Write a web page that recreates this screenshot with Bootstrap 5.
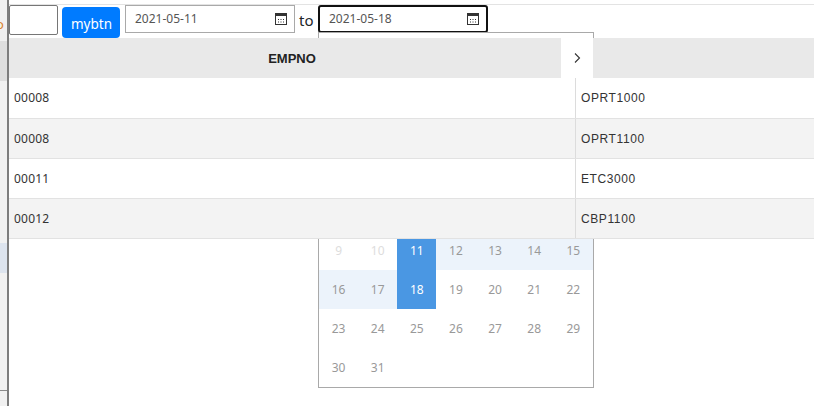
<!DOCTYPE html>
<html lang="en">
<head>
<meta charset="utf-8">
<link href="https://cdn.jsdelivr.net/npm/bootstrap@5.3.0/dist/css/bootstrap.min.css" rel="stylesheet">
<style>
html,body{height:100%;overflow:hidden;background:#fff}
body{font-family:"Noto Sans","Open Sans",sans-serif;color:#212529}
.shell{height:406px;width:814px}
.side-rail{width:9px;flex:none;background:linear-gradient(#f0f0f0 0 41px,#dedede 41px 81px,#f1f1f1 81px 243px,#dde4ee 243px 273px,#f1f1f1 273px 390px,#8a8a8a 390px 391px,#f1f1f1 391px);border-right:2px solid #7d7d7d;overflow:hidden}
.side-rail span{display:block;font-size:13px;line-height:18px;margin:15px 0 0 -4px;color:#d9822b}
.work{flex:1;min-width:0;position:relative;border-top:1px solid #e3e3e3;margin-top:4px;height:402px}
.tools{height:33px;gap:4px}
.blank-in{width:49px;height:30px;border:1px solid #767676;border-radius:2px;background:#fff}
.my-btn{width:58px;height:31px;margin-top:2px;padding:2px 0 0 1px;font-size:13.5px;line-height:24px;background:#007bff;border:0;border-radius:4px;color:#fff}
.date-box{width:170px;height:28px;border:1px solid #a9a9a9;font-size:12px;padding-left:9px;color:#555;background:#fff;margin-left:1px}
.date-box.on{border:2px solid #111;border-radius:3px;width:170px;margin-left:0;padding-left:9px}
.date-box svg{margin-right:7px}
.to-word{font-size:15px;width:15px;line-height:28px;margin-top:1px}
.cal-pop{position:absolute;left:309px;top:27px;width:276px;height:356px;border:1px solid #a9a9a9;background:#fff;font-size:12px;color:#999;z-index:1}
.cal-grid{position:absolute;left:0;top:198px;display:grid;grid-template-columns:repeat(7,39.14px);grid-auto-rows:39px;width:274px}
.cal-grid div{display:flex;align-items:center;justify-content:center}
.cal-grid .off{color:#ddd}
.cal-grid .rng{background:#ecf3fb}
.cal-grid .end{background:#4a97e3;color:#fff}
.data-grid{position:absolute;left:0;right:0;top:33px;z-index:2;font-size:12px;color:#333;font-family:"Noto Sans",sans-serif;background:#fff}
.head-row{height:40px;background:#e9e9e9;position:relative}
.head-cell{width:566px;height:40px;line-height:41px;font-size:13px;font-weight:700;text-align:center;font-family:"Liberation Sans",sans-serif;color:#222}
.next-tab{position:absolute;left:552px;top:0;width:32px;height:40px;background:#fff}
.next-tab svg{display:block;margin:15px 0 0 12px}
.row-line{height:40px;border-bottom:1px solid #e2e2e2;line-height:39px}
.row-line.first-line{height:41px}
.row-line.alt{background:#f3f3f3}
.cell-a{width:566px;padding-left:5px;letter-spacing:.2px}
.cell-b{flex:1;border-left:1px solid #dcdcdc;padding-left:5px;height:39px;line-height:41px;font-family:"Liberation Sans",sans-serif;letter-spacing:.6px}
.row-line.first-line .cell-b{height:40px}
</style>
</head>
<body>
<div class="shell d-flex">
  <div class="side-rail"><span>o</span></div>
  <div class="work">
    <div class="tools d-flex align-items-start">
      <div class="blank-in"></div>
      <button class="my-btn" type="button">mybtn</button>
      <div class="date-box d-flex align-items-center justify-content-between"><span>2021-05-11</span>
        <svg width="12" height="12" viewBox="0 0 12 12"><rect x=".5" y=".5" width="11" height="11" fill="#fff" stroke="#333"/><rect x="0" y="0" width="12" height="3" fill="#333"/><path d="M3 6h1v1H3zM5.500 6h1v1h-1zM8 6h1v1H8zM3 8.500h1v1H3zM5.500 8.500h1v1h-1zM8 8.500h1v1H8z" fill="#333"/></svg></div>
      <div class="to-word">to</div>
      <div class="date-box on d-flex align-items-center justify-content-between"><span>2021-05-18</span>
        <svg width="12" height="12" viewBox="0 0 12 12"><rect x=".5" y=".5" width="11" height="11" fill="#fff" stroke="#333"/><rect x="0" y="0" width="12" height="3" fill="#333"/><path d="M3 6h1v1H3zM5.500 6h1v1h-1zM8 6h1v1H8zM3 8.500h1v1H3zM5.500 8.500h1v1h-1zM8 8.500h1v1H8z" fill="#333"/></svg></div>
    </div>
    <div class="cal-pop">
      <div class="cal-grid">
        <div class="off">9</div><div class="off">10</div><div class="end">11</div><div class="rng">12</div><div class="rng">13</div><div class="rng">14</div><div class="rng">15</div>
        <div class="rng">16</div><div class="rng">17</div><div class="end">18</div><div>19</div><div>20</div><div>21</div><div>22</div>
        <div>23</div><div>24</div><div>25</div><div>26</div><div>27</div><div>28</div><div>29</div>
        <div>30</div><div>31</div>
      </div>
    </div>
    <div class="data-grid">
      <div class="head-row d-flex"><div class="head-cell">EMPNO</div><div class="next-tab"><svg width="9" height="10" viewBox="0 0 9 10"><path d="M2 .5 6.500 5 2 9.500" fill="none" stroke="#333" stroke-width="1.100"/></svg></div></div>
      <div class="row-line first-line d-flex"><div class="cell-a">00008</div><div class="cell-b">OPRT1000</div></div>
      <div class="row-line alt d-flex"><div class="cell-a">00008</div><div class="cell-b">OPRT1100</div></div>
      <div class="row-line d-flex"><div class="cell-a">00011</div><div class="cell-b">ETC3000</div></div>
      <div class="row-line alt d-flex"><div class="cell-a">00012</div><div class="cell-b">CBP1100</div></div>
    </div>
  </div>
</div>
<script src="https://cdn.jsdelivr.net/npm/bootstrap@5.3.0/dist/js/bootstrap.bundle.min.js"></script>
</body>
</html>
